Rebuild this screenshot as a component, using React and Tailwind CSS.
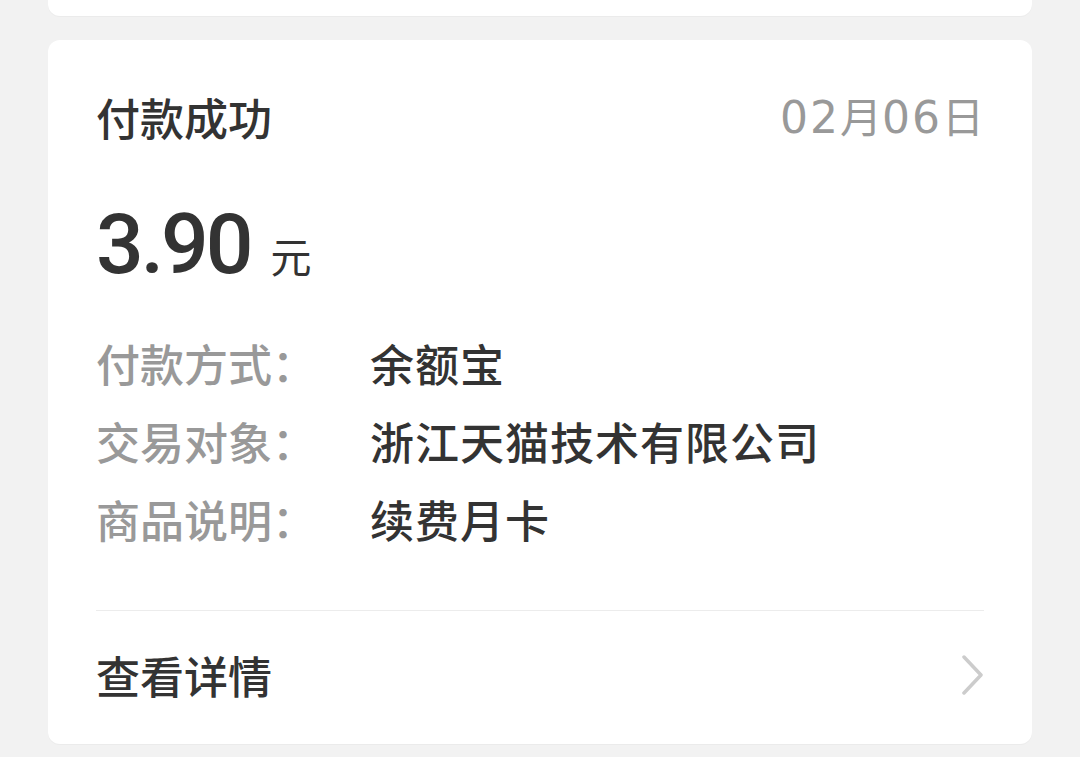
export default function App() {
  const rows = [
    ["付款方式：", "余额宝"],
    ["交易对象：", "浙江天猫技术有限公司"],
    ["商品说明：", "续费月卡"],
  ];
  const cjk = { fontFamily: '"Noto Sans CJK SC", sans-serif' };
  const digits = { fontFamily: '"DejaVu Sans", sans-serif' };
  return (
    <div className="h-[757px] overflow-hidden bg-[#f2f2f2] px-12" style={cjk}>
      {/* tail of the previous card */}
      <div className="h-4 rounded-b-xl bg-white shadow-[0_1px_1px_rgba(0,0,0,0.03)]" />

      <div className="mt-6 rounded-xl bg-white px-12 shadow-[0_1px_1px_rgba(0,0,0,0.03)]">
        <div className="flex items-center justify-between pt-[54px]">
          <div className="text-[44px] font-medium leading-[44px] text-[#333]">付款成功</div>
          <div className="-mt-px text-[42px] leading-[44px] text-[#999]">
            <span className="text-[44px] tracking-[2px]" style={digits}>02</span>月
            <span className="text-[44px] tracking-[2px]" style={digits}>06</span>日
          </div>
        </div>

        <div className="mt-[63px] flex items-baseline text-[#333]">
          <span
            className="text-[84px] font-medium leading-[84px] tracking-[-3px]"
            style={{ fontFamily: 'Roboto, sans-serif' }}
          >
            3.90
          </span>
          <span className="ml-[20px] text-[41px] leading-none">元</span>
        </div>

        <div className="mt-[37px]">
          {rows.map(([k, v]) => (
            <div key={k} className="flex text-[44px] font-medium leading-[78px]">
              <div className="w-[274px] shrink-0 text-[#999]">{k}</div>
              <div className="tracking-[1px] text-[#333]">{v}</div>
            </div>
          ))}
        </div>

        <div className="mt-[52px] h-px bg-[#ececec]" />

        <div className="flex h-[133px] items-center justify-between pb-[6px]">
          <div className="text-[44px] font-medium leading-[44px] text-[#333]">查看详情</div>
          <svg width="24" height="40" viewBox="0 0 24 40" className="-mr-px">
            <polyline
              points="3,2 20,20 3,38"
              fill="none"
              stroke="#cccccc"
              strokeWidth="3.5"
              strokeLinecap="round"
              strokeLinejoin="round"
            />
          </svg>
        </div>
      </div>
    </div>
  );
}
